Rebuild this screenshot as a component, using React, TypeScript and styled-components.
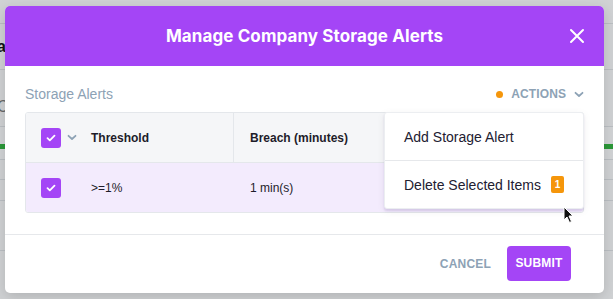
import React from "react";
import styled, { createGlobalStyle } from "styled-components";

const GlobalStyle = createGlobalStyle`
  html, body { margin: 0; padding: 0; }
  body { background: #ffffff; font-family: "Liberation Sans", Arial, sans-serif; }
`;

const PURPLE = "#a445f6";
const MUTED = "#8da2b5";

const Page = styled.div`
  position: relative;
  width: 613px;
  height: 299px;
  overflow: hidden;
  background: #fdfdfd;
`;

const BgRow = styled.div<{ $h: number; $green?: boolean; $bottom?: number }>`
  height: ${(p) => p.$h}px;
  border-bottom: 1px solid #e3e5e8;
  box-sizing: border-box;
  display: flex;
  align-items: ${(p) => (p.$bottom !== undefined ? "flex-end" : "center")};
  padding-bottom: ${(p) => p.$bottom ?? 0}px;
  font-size: 14px;
  color: #555;
  ${(p) => (p.$green ? "background: linear-gradient(#fff 0 54%, #2fb53a 54% 70%, #fff 70%);" : "")}
`;

const BgText = styled.span<{ $bold?: boolean }>`
  margin-left: -3px;
  font-weight: ${(p) => (p.$bold ? 700 : 400)};
  color: ${(p) => (p.$bold ? "#111" : "#777")};
  font-size: 16px;
`;

const Overlay = styled.div`
  position: absolute;
  inset: 0;
  background: rgba(30, 38, 50, 0.2);
`;

const Modal = styled.div`
  position: absolute;
  left: 5px;
  top: 6px;
  width: 599px;
  height: 287px;
  background: #fff;
  border-radius: 5px;
  box-shadow: 0 4px 14px rgba(0, 0, 0, 0.15);
  display: flex;
  flex-direction: column;
  overflow: hidden;
`;

const Header = styled.div`
  height: 60px;
  flex: none;
  background: ${PURPLE};
  display: grid;
  grid-template-columns: 1fr auto 1fr;
  align-items: center;
`;

const Title = styled.h2`
  grid-column: 2;
  margin: 0;
  color: #fff;
  font-family: Inter, "Open Sans", sans-serif;
  font-weight: 700;
  font-size: 17px;
  letter-spacing: 0.1px;
`;

const Close = styled.button`
  grid-column: 3;
  justify-self: end;
  margin-right: 19px;
  background: none;
  border: 0;
  padding: 0;
  width: 16px;
  height: 16px;
  display: flex;
  cursor: pointer;
`;

const Body = styled.div`
  position: relative;
  padding: 18px 20px 21px;
`;

const SectionHead = styled.div`
  height: 20px;
  display: flex;
  align-items: center;
  justify-content: space-between;
  margin-bottom: 8px;
`;

const SectionTitle = styled.span`
  font-size: 14px;
  color: ${MUTED};
`;

const Actions = styled.div`
  display: flex;
  align-items: center;
  gap: 8px;
  font-size: 12px;
  font-weight: 700;
  color: ${MUTED};
  letter-spacing: 0.1px;
`;

const Dot = styled.span`
  width: 7px;
  height: 7px;
  border-radius: 50%;
  background: #f5960b;
`;

const Table = styled.div`
  border: 1px solid #e4e7eb;
  border-radius: 3px;
  overflow: hidden;
`;

const Row = styled.div<{ $head?: boolean }>`
  display: grid;
  grid-template-columns: 65px 143px 1fr;
  height: ${(p) => (p.$head ? 50 : 49)}px;
  align-items: stretch;
  background: ${(p) => (p.$head ? "#f5f6f8" : "#f3ebfd")};
  border-bottom: ${(p) => (p.$head ? "1px solid #e4e7eb" : "0")};
  box-sizing: border-box;
  font-size: 12px;
  color: #1e1c2a;
  font-weight: ${(p) => (p.$head ? 700 : 400)};
`;

const Cell = styled.div<{ $sep?: boolean; $pad?: number }>`
  display: flex;
  align-items: center;
  gap: 6px;
  padding-left: ${(p) => p.$pad ?? 0}px;
  border-right: ${(p) => (p.$sep ? "1px solid #e4e7eb" : "0")};
`;

const Check = styled.span`
  width: 20px;
  height: 20px;
  border-radius: 3px;
  background: ${PURPLE};
  display: flex;
  align-items: center;
  justify-content: center;
`;

const Dropdown = styled.div`
  position: absolute;
  left: 379px;
  top: 46px;
  width: 200px;
  background: #fff;
  border-radius: 3px;
  border: 1px solid #eceef1;
  box-sizing: border-box;
  box-shadow: 0 2px 2px rgba(120, 90, 170, 0.18), 0 2px 8px rgba(0, 0, 0, 0.06);
`;

const Item = styled.div<{ $divider?: boolean }>`
  height: 47px;
  display: flex;
  align-items: center;
  padding-left: 19px;
  gap: 10px;
  font-size: 14px;
  color: #222031;
  border-bottom: ${(p) => (p.$divider ? "1px solid #e6e8eb" : "0")};
`;

const Badge = styled.span`
  width: 13px;
  height: 17px;
  border-radius: 2px;
  background: #f5960b;
  color: #fff;
  font-size: 10px;
  font-weight: 700;
  display: flex;
  align-items: center;
  justify-content: center;
`;

const Footer = styled.div`
  flex: 1;
  border-top: 1px solid #e6e8eb;
  display: flex;
  justify-content: flex-end;
  align-items: center;
  gap: 16px;
  padding-right: 33px;
`;

const TextButton = styled.button`
  background: none;
  border: 0;
  padding: 0;
  font-family: inherit;
  font-size: 12px;
  font-weight: 700;
  color: ${MUTED};
  letter-spacing: 0.2px;
`;

const Submit = styled.button`
  width: 64px;
  height: 35px;
  margin-bottom: 2px;
  border: 0;
  border-radius: 4px;
  background: ${PURPLE};
  color: #fff;
  font-family: inherit;
  font-size: 12px;
  font-weight: 700;
  letter-spacing: 0.2px;
`;

const Cursor = styled.svg`
  position: absolute;
  left: 563px;
  top: 206px;
`;

const CheckMark = () => (
  <svg width="10" height="8" viewBox="0 0 10 8">
    <path d="M1.5 4.2 L3.8 6.3 L8.5 1.6" fill="none" stroke="#fff" strokeWidth="1.8" strokeLinecap="round" strokeLinejoin="round" />
  </svg>
);

const Chevron = ({ color = MUTED }: { color?: string }) => (
  <svg width="10" height="7" viewBox="0 0 10 7">
    <path d="M1.5 1.8 L5 5 L8.5 1.8" fill="none" stroke={color} strokeWidth="1.8" strokeLinecap="round" strokeLinejoin="round" />
  </svg>
);

export default function App() {
  return (
    <>
      <GlobalStyle />
      <Page>
        <BgRow $h={24} />
        <BgRow $h={46}>
          <BgText $bold>a</BgText>
        </BgRow>
        <BgRow $h={57} $bottom={10}>
          <BgText>C</BgText>
        </BgRow>
        <BgRow $h={33} $green />
        <BgRow $h={20} />
        <BgRow $h={21} />
        <BgRow $h={50} />
        <BgRow $h={50} />
        <Overlay />
        <Modal>
          <Header>
            <Title>Manage Company Storage Alerts</Title>
            <Close aria-label="Close">
              <svg width="16" height="16" viewBox="0 0 16 16">
                <path d="M2 2 L14 14 M14 2 L2 14" stroke="#fff" strokeWidth="2" strokeLinecap="round" />
              </svg>
            </Close>
          </Header>
          <Body>
            <SectionHead>
              <SectionTitle>Storage Alerts</SectionTitle>
              <Actions>
                <Dot />
                ACTIONS
                <Chevron />
              </Actions>
            </SectionHead>
            <Table>
              <Row $head>
                <Cell $pad={15}>
                  <Check>
                    <CheckMark />
                  </Check>
                  <Chevron />
                </Cell>
                <Cell $sep>Threshold</Cell>
                <Cell $pad={16}>Breach (minutes)</Cell>
              </Row>
              <Row>
                <Cell $pad={15}>
                  <Check>
                    <CheckMark />
                  </Check>
                </Cell>
                <Cell>&gt;=1%</Cell>
                <Cell $pad={16}>1 min(s)</Cell>
              </Row>
            </Table>
            <Dropdown>
              <Item $divider>Add Storage Alert</Item>
              <Item>
                Delete Selected Items
                <Badge>1</Badge>
              </Item>
            </Dropdown>
          </Body>
          <Footer>
            <TextButton>CANCEL</TextButton>
            <Submit>SUBMIT</Submit>
          </Footer>
        </Modal>
        <Cursor width="12" height="18" viewBox="0 0 12 18">
          <path d="M1 1 L1 14 L4 11 L6.5 16.5 L8.5 15.5 L6 10 L10 10 Z" fill="#111" stroke="#fff" strokeWidth="1" />
        </Cursor>
      </Page>
    </>
  );
}
